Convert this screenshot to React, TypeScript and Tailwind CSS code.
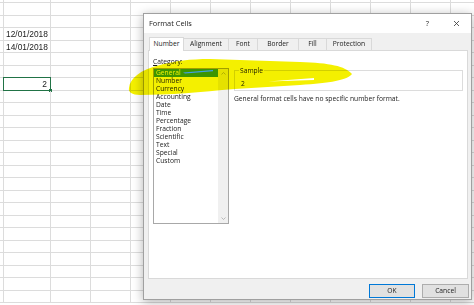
import React from "react";

const FONT = { fontFamily: '"Open Sans", "Noto Sans", sans-serif' };

function colClass(i: number) {
  if (i === 0) return "w-[4px]";
  if (i === 1) return "w-[47px]";
  return "w-[40px]";
}

function rowClass(i: number) {
  if (i === 0) return "h-[3px]";
  return i % 2 === 1 ? "h-[13px]" : "h-[12px]";
}

const cellText: Record<number, string> = { 3: "12/01/2018", 4: "14/01/2018" };

function Sheet() {
  const rows = Array.from({ length: 25 }, (_, i) => i);
  const cols = Array.from({ length: 13 }, (_, i) => i);
  return (
    <div className="flex flex-col" style={{ fontFamily: '"Liberation Sans", Arial, sans-serif' }}>
      {rows.map((r) => (
        <div key={r} className={`${rowClass(r)} flex shrink-0 border-b border-[#dcdcdc]`}>
          {cols.map((c) => (
            <div key={c} className={`${colClass(c)} relative shrink-0 border-r border-[#dcdcdc]`}>
              {c === 1 && cellText[r] && (
                <span className="absolute left-[2px] top-0 text-[8.4px] leading-[12px] text-[#222]">{cellText[r]}</span>
              )}
              {c === 1 && r === 7 && (
                <>
                  <span className="absolute right-[3px] top-0 text-[8.4px] leading-[12px] text-[#222]">2</span>
                  <div className="absolute -left-px -top-px -right-px -bottom-px border-[1.5px] border-[#217346]" />
                  <div className="absolute -right-[2px] -bottom-[2px] w-[3px] h-[3px] bg-[#217346]" />
                </>
              )}
            </div>
          ))}
        </div>
      ))}
    </div>
  );
}

const categories = [
  "General",
  "Number",
  "Currency",
  "Accounting",
  "Date",
  "Time",
  "Percentage",
  "Fraction",
  "Scientific",
  "Text",
  "Special",
  "Custom",
];

const tabs: { label: string; w: string }[] = [
  { label: "Number", w: "w-[35px]" },
  { label: "Alignment", w: "w-[46px]" },
  { label: "Font", w: "w-[30px]" },
  { label: "Border", w: "w-[42px]" },
  { label: "Fill", w: "w-[29px]" },
  { label: "Protection", w: "w-[46px]" },
];

function Dialog() {
  return (
    <div
      className="absolute left-[143px] top-[13px] w-[329px] h-[287px] flex flex-col border border-[#a0a0a0] bg-[#f0f0f0] shadow-[0_2px_10px_rgba(0,0,0,0.3)] text-[6.7px] text-[#1b1b1b]"
      style={FONT}
    >
      {/* title bar */}
      <div className="h-[19px] shrink-0 bg-white flex items-center pl-[5px]">
        <span className="text-[7.4px]">Format Cells</span>
        <span className="ml-auto text-[7.4px] mr-[24px]">?</span>
        <svg width="7" height="7" viewBox="0 0 7 7" className="mr-[11px]">
          <path d="M1 1 L6 6 M6 1 L1 6" stroke="#333" strokeWidth="0.8" />
        </svg>
      </div>
      {/* tabs */}
      <div className="flex items-end pt-[3px] pl-[5px] h-[17px] shrink-0">
        {tabs.map((t, i) => (
          <div
            key={t.label}
            className={
              i === 0
                ? `${t.w} relative z-10 -mb-px h-[14px] flex items-center justify-center bg-white border border-b-0 border-[#d9d9d9]`
                : `${t.w} -ml-px h-[12px] flex items-center justify-center border border-b-0 border-[#d9d9d9]`
            }
          >
            {t.label}
          </div>
        ))}
      </div>
      {/* panel */}
      <div className="ml-[4px] mr-[3px] h-[229px] shrink-0 bg-white border border-[#d9d9d9] flex pt-[6px] pl-[4px]">
        <div className="flex flex-col">
          <div className="h-[9px] leading-[9px]">
            <span className="underline">C</span>ategory:
          </div>
          <div className="mt-[2px] w-[76px] h-[156px] border border-[#a8a8a8] flex">
            <div className="flex-1 flex flex-col">
              {categories.map((c, i) => (
                <div
                  key={c}
                  className={
                    i === 0
                      ? "h-[8px] leading-[8px] pl-[2px] bg-[#3f9ee8] text-white"
                      : "h-[8px] leading-[8px] pl-[2px]"
                  }
                >
                  {c}
                </div>
              ))}
            </div>
            <div className="w-[10px] bg-[#f0f0f0] flex flex-col items-center justify-between py-[3px]">
              <svg width="5" height="3" viewBox="0 0 5 3">
                <path d="M0.5 2.5 L2.5 0.5 L4.5 2.5" stroke="#a0a0a0" strokeWidth="0.7" fill="none" />
              </svg>
              <svg width="5" height="3" viewBox="0 0 5 3">
                <path d="M0.5 0.5 L2.5 2.5 L4.5 0.5" stroke="#a0a0a0" strokeWidth="0.7" fill="none" />
              </svg>
            </div>
          </div>
        </div>
        <div className="ml-[5px] mt-[9px] flex flex-col">
          <fieldset className="w-[229px] border border-[#dcdcdc] px-[5px] pb-[2px]">
            <legend className="h-[9px] leading-[9px] px-[1px] -ml-[1px]">Sample</legend>
            <div className="h-[9px] leading-[9px] mt-[4px] pl-[1px]">2</div>
          </fieldset>
          <div className="mt-[3px] h-[9px] leading-[9px]">General format cells have no specific number format.</div>
        </div>
      </div>
      {/* buttons */}
      <div className="flex justify-end gap-[7px] pt-[5px] pr-[2px]">
        <div className="w-[46px] h-[14px] flex items-center justify-center bg-[#e1e1e1] border border-[#0078d7]">OK</div>
        <div className="w-[47px] h-[14px] flex items-center justify-center bg-[#e1e1e1] border border-[#adadad]">Cancel</div>
      </div>
    </div>
  );
}

function Highlighter() {
  return (
    <svg
      className="absolute inset-0 pointer-events-none mix-blend-multiply"
      width="474"
      height="305"
      viewBox="0 0 474 305"
    >
      <path
        fillRule="evenodd"
        fill="#f4f000"
        d="M129 88 C130 78 140 70 160 65 C175 61 190 59 210 59 L300 62 C330 63 345 66 352 74 C348 80 330 83 300 85 L235 89 C200 92 170 95 140 95 C132 95 128 92 129 88 Z
           M183 72.5 L213 70 L213 71.2 L185 73.5 Z
           M268 81.5 L314 78 L314 80 Z"
      />
    </svg>
  );
}

export default function App() {
  return (
    <div className="relative w-[474px] h-[305px] overflow-hidden bg-white">
      <Sheet />
      <Dialog />
      <Highlighter />
    </div>
  );
}
